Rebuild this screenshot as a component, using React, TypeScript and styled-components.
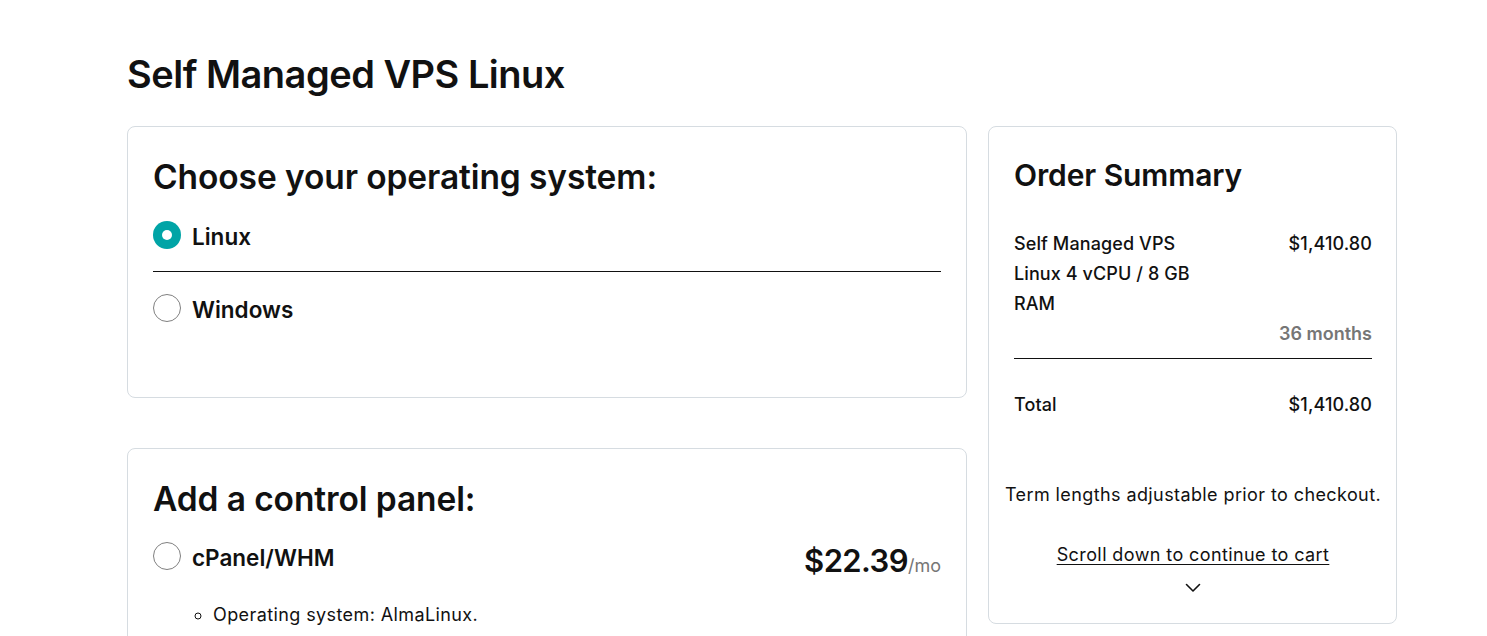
import React from "react";
import styled, { createGlobalStyle } from "styled-components";

const GlobalStyle = createGlobalStyle`
  html, body {
    margin: 0;
    padding: 0;
    background: #fff;
  }
  body {
    font-family: Inter, "Noto Sans", sans-serif;
    color: #111;
  }
`;

const Page = styled.div`
  padding: 50px 90px 0 127px;
  height: 636px;
  box-sizing: border-box;
  overflow: hidden;
`;

const Title = styled.h1`
  margin: 0 0 28px;
  font-size: 38px;
  line-height: 48px;
  font-weight: 600;
  letter-spacing: -0.5px;
`;

const Layout = styled.div`
  display: grid;
  grid-template-columns: 840px 409px;
  gap: 21px;
  align-items: start;
`;

const Column = styled.div`
  display: flex;
  flex-direction: column;
  gap: 50px;
`;

const Card = styled.section<{ $minHeight?: number }>`
  border: 1px solid #d6dce1;
  border-radius: 8px;
  padding: 26px 25px;
  min-height: ${(p) => (p.$minHeight ? `${p.$minHeight}px` : "auto")};
  box-sizing: border-box;
`;

const CardHeading = styled.h2<{ $spacing: number }>`
  margin: 0 0 ${(p) => p.$spacing}px;
  font-size: 33.5px;
  line-height: 48px;
  font-weight: 600;
  letter-spacing: -0.1px;
`;

const OptionRow = styled.label<{ $divider?: boolean }>`
  display: flex;
  align-items: center;
  gap: 11px;
  padding: ${(p) => (p.$divider ? "0 0 20px" : "0")};
  margin-bottom: ${(p) => (p.$divider ? "19px" : "0")};
  border-bottom: ${(p) => (p.$divider ? "1px solid #111" : "none")};
  font-size: 22.5px;
  font-weight: 600;
  line-height: 28px;
`;

const OptionLabel = styled.span`
  padding-top: 5px;
`;

const Radio = styled.span<{ $checked?: boolean }>`
  width: 28px;
  height: 28px;
  border-radius: 50%;
  box-sizing: border-box;
  flex: none;
  background: ${(p) => (p.$checked ? "#00a4a6" : "#fff")};
  border: ${(p) => (p.$checked ? "none" : "1px solid #808080")};
  display: flex;
  align-items: center;
  justify-content: center;

  &::after {
    content: "";
    display: ${(p) => (p.$checked ? "block" : "none")};
    width: 10px;
    height: 10px;
    border-radius: 50%;
    background: #fff;
  }
`;

const PanelRow = styled.div`
  display: flex;
  align-items: center;
  justify-content: space-between;
`;

const Price = styled.span`
  font-size: 31px;
  font-weight: 600;
  letter-spacing: -0.6px;
  padding-top: 10px;
`;

const PerMonth = styled.span`
  font-size: 18px;
  font-weight: 400;
  color: #767676;
  letter-spacing: 0;
`;

const Features = styled.ul`
  margin: 24px 0 0;
  padding-left: 60px;
  list-style: circle;
  font-size: 18px;
  line-height: 24px;
  letter-spacing: 0.4px;
`;

const SummaryCard = styled(Card)`
  min-height: 498px;
  padding-right: 24px;
  display: flex;
  flex-direction: column;
`;

const SummaryHeading = styled.h2`
  margin: 0 0 32px;
  font-size: 30px;
  line-height: 44px;
  font-weight: 600;
  letter-spacing: -0.1px;
`;

const LineItem = styled.div`
  display: flex;
  justify-content: space-between;
  gap: 24px;
  font-size: 18px;
  font-weight: 500;
  line-height: 30px;
  letter-spacing: 0.1px;
`;

const ItemName = styled.span`
  max-width: 190px;
`;

const Term = styled.div`
  text-align: right;
  color: #767676;
  font-size: 18px;
  font-weight: 600;
  line-height: 30px;
  padding-bottom: 9px;
  border-bottom: 1px solid #111;
  margin-bottom: 31px;
`;

const Note = styled.p`
  margin: 60px -20px 0;
  text-align: center;
  font-size: 18px;
  line-height: 30px;
  letter-spacing: 0.4px;
`;

const ScrollLink = styled.a`
  display: block;
  margin-top: 30px;
  text-align: center;
  font-size: 18px;
  line-height: 30px;
  letter-spacing: 0.4px;
  color: #111;
  text-decoration: underline;
  text-underline-offset: 3px;
`;

const Chevron = styled.div`
  display: flex;
  justify-content: center;
  margin-top: 13px;
`;

export default function App() {
  return (
    <>
      <GlobalStyle />
      <Page>
        <Title>Self Managed VPS Linux</Title>
        <Layout>
          <Column>
            <Card $minHeight={272}>
              <CardHeading $spacing={17}>Choose your operating system:</CardHeading>
              <OptionRow $divider>
                <Radio $checked />
                <OptionLabel>Linux</OptionLabel>
              </OptionRow>
              <OptionRow>
                <Radio />
                <OptionLabel>Windows</OptionLabel>
              </OptionRow>
            </Card>
            <Card $minHeight={300}>
              <CardHeading $spacing={9}>Add a control panel:</CardHeading>
              <PanelRow>
                <OptionRow>
                  <Radio />
                  <OptionLabel>cPanel/WHM</OptionLabel>
                </OptionRow>
                <Price>
                  $22.39<PerMonth>/mo</PerMonth>
                </Price>
              </PanelRow>
              <Features>
                <li>Operating system: AlmaLinux.</li>
              </Features>
            </Card>
          </Column>
          <SummaryCard>
            <SummaryHeading>Order Summary</SummaryHeading>
            <LineItem>
              <ItemName>Self Managed VPS Linux 4 vCPU / 8 GB RAM</ItemName>
              <span>$1,410.80</span>
            </LineItem>
            <Term>36 months</Term>
            <LineItem>
              <span>Total</span>
              <span>$1,410.80</span>
            </LineItem>
            <Note>Term lengths adjustable prior to checkout.</Note>
            <ScrollLink href="#cart">Scroll down to continue to cart</ScrollLink>
            <Chevron>
              <svg width="16" height="10" viewBox="0 0 16 10" fill="none">
                <path d="M1.5 1.5 8 8l6.5-6.5" stroke="#111" strokeWidth="1.6" strokeLinecap="round" strokeLinejoin="round" />
              </svg>
            </Chevron>
          </SummaryCard>
        </Layout>
      </Page>
    </>
  );
}
